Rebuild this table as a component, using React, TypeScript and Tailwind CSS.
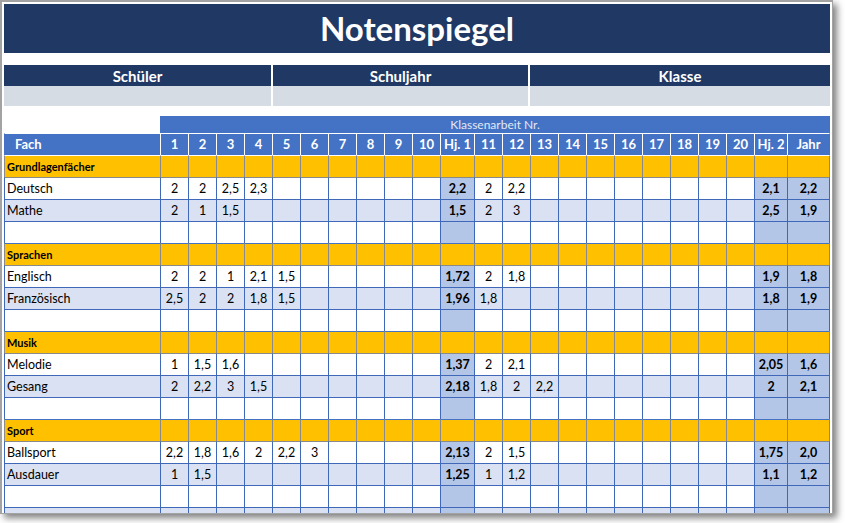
const widthClass = [
  "w-[156px]",
  "w-[28px]", "w-[28px]", "w-[28px]", "w-[28px]", "w-[28px]",
  "w-[28px]", "w-[28px]", "w-[28px]", "w-[28px]", "w-[28px]",
  "w-[34px]",
  "w-[28px]", "w-[28px]", "w-[28px]", "w-[28px]", "w-[28px]",
  "w-[28px]", "w-[28px]", "w-[28px]", "w-[28px]", "w-[28px]",
  "w-[33px]",
  "w-[43px]",
]

const headers = [
  "Fach",
  "1", "2", "3", "4", "5", "6", "7", "8", "9", "10",
  "Hj. 1",
  "11", "12", "13", "14", "15", "16", "17", "18", "19", "20",
  "Hj. 2",
  "Jahr",
]

const HJ = [11, 22, 23]
const LAST = headers.length - 1

type Row =
  | { t: "cat"; label: string }
  | { t: "row"; label: string; alt: boolean; a: string[]; h1: string; b: string[]; h2: string; j: string }
  | { t: "empty"; alt: boolean }

const rows: Row[] = [
  { t: "cat", label: "Grundlagenfächer" },
  { t: "row", label: "Deutsch", alt: false, a: ["2", "2", "2,5", "2,3"], h1: "2,2", b: ["2", "2,2"], h2: "2,1", j: "2,2" },
  { t: "row", label: "Mathe", alt: true, a: ["2", "1", "1,5"], h1: "1,5", b: ["2", "3"], h2: "2,5", j: "1,9" },
  { t: "empty", alt: false },
  { t: "cat", label: "Sprachen" },
  { t: "row", label: "Englisch", alt: false, a: ["2", "2", "1", "2,1", "1,5"], h1: "1,72", b: ["2", "1,8"], h2: "1,9", j: "1,8" },
  { t: "row", label: "Französisch", alt: true, a: ["2,5", "2", "2", "1,8", "1,5"], h1: "1,96", b: ["1,8"], h2: "1,8", j: "1,9" },
  { t: "empty", alt: false },
  { t: "cat", label: "Musik" },
  { t: "row", label: "Melodie", alt: false, a: ["1", "1,5", "1,6"], h1: "1,37", b: ["2", "2,1"], h2: "2,05", j: "1,6" },
  { t: "row", label: "Gesang", alt: true, a: ["2", "2,2", "3", "1,5"], h1: "2,18", b: ["1,8", "2", "2,2"], h2: "2", j: "2,1" },
  { t: "empty", alt: false },
  { t: "cat", label: "Sport" },
  { t: "row", label: "Ballsport", alt: false, a: ["2,2", "1,8", "1,6", "2", "2,2", "3"], h1: "2,13", b: ["2", "1,5"], h2: "1,75", j: "2,0" },
  { t: "row", label: "Ausdauer", alt: true, a: ["1", "1,5"], h1: "1,25", b: ["1", "1,2"], h2: "1,1", j: "1,2" },
  { t: "empty", alt: false },
  { t: "empty", alt: true },
]

function pad(v: string[]) {
  return Array.from({ length: 10 }, (_, i) => v[i] ?? "")
}

function valuesOf(r: Row): string[] {
  if (r.t === "row") return [r.label, ...pad(r.a), r.h1, ...pad(r.b), r.h2, r.j]
  return headers.map(() => "")
}

function HeaderRow() {
  return (
    <div className="flex h-[22px]">
      {headers.map((h, i) => (
        <div
          key={i}
          className={`${widthClass[i]} shrink-0 flex items-center border-l border-t border-t-white bg-[#4472C4] pt-[1px] text-[13px] font-bold text-white ${
            i === 0 ? "justify-start pl-[10px] border-l-[#4472C4]" : "justify-center border-l-white"
          } ${i === LAST ? "border-r border-r-[#4472C4]" : ""}`}
        >
          {h}
        </div>
      ))}
    </div>
  )
}

function CatRow({ label, first }: { label: string; first: boolean }) {
  return (
    <div className="flex h-[22px]">
      {headers.map((_, i) => (
        <div
          key={i}
          className={`${widthClass[i]} shrink-0 flex items-center border-l border-t border-l-[#8a8a8a] bg-[#FFC000] pt-[2px] ${
            first ? "border-t-white" : "border-t-[#4472C4]"
          } ${i === LAST ? "border-r border-r-[#8a8a8a]" : ""}`}
        >
          {i === 0 && <span className="pl-[2px] text-[11px] font-bold text-black">{label}</span>}
        </div>
      ))}
    </div>
  )
}

function DataRow({ row, afterCat }: { row: Row; afterCat: boolean }) {
  const alt = row.t !== "cat" && row.alt
  const vals = valuesOf(row)
  return (
    <div className="flex h-[22px]">
      {vals.map((v, i) => {
        const hj = HJ.includes(i)
        const bg = hj ? "bg-[#B4C6E7]" : alt ? "bg-[#D9E1F2]" : "bg-white"
        return (
          <div
            key={i}
            className={`${widthClass[i]} shrink-0 flex items-center border-l border-t border-l-[#3F69B8] pt-[2px] ${
              afterCat ? "border-t-[#8a8a8a]" : "border-t-[#3F69B8]"
            } ${bg} ${i === 0 ? "justify-start pl-[2px]" : "justify-center"} ${hj ? "font-bold" : ""} ${
              i === LAST ? "border-r border-r-[#3F69B8]" : ""
            } text-[12.5px] text-black`}
          >
            {v}
          </div>
        )
      })}
    </div>
  )
}

function InfoBlock({ label, width }: { label: string; width: string }) {
  return (
    <div className={`${width} flex flex-col`}>
      <div className="flex h-[21px] items-center justify-center bg-[#203864] pt-[1px] text-[15px] font-bold text-white">{label}</div>
      <div className="h-[20px] bg-[#D6DCE4]" />
    </div>
  )
}

export default function App() {
  return (
    <div className="h-[523px] w-[845px] overflow-hidden bg-white [font-family:Lato,'Liberation_Sans',sans-serif]">
      <div className="h-[514px] w-[833px] overflow-hidden border-b border-l-2 border-r border-t-2 border-[#a3a3a3] bg-white p-[2px] shadow-[4px_4px_7px_rgba(0,0,0,0.5)]">
        <div className="flex h-[49px] items-center justify-center bg-[#203864] text-[33px] font-bold text-white">
          Notenspiegel
        </div>

        <div className="mt-[12px] flex gap-[2px]">
          <InfoBlock label="Schüler" width="w-[267px]" />
          <InfoBlock label="Schuljahr" width="w-[255px]" />
          <InfoBlock label="Klasse" width="w-[300px]" />
        </div>

        <div className="mt-[10px] flex h-[17px]">
          <div className="w-[156px] shrink-0" />
          <div className="flex flex-1 items-center justify-center bg-[#4472C4] pt-[1px] text-[12px] text-[#e2e9f6]">
            Klassenarbeit Nr.
          </div>
        </div>

        <HeaderRow />
        {rows.map((r, idx) => {
          const prev = rows[idx - 1]
          if (r.t === "cat") return <CatRow key={idx} label={r.label} first={idx === 0} />
          return <DataRow key={idx} row={r} afterCat={prev?.t === "cat"} />
        })}
      </div>
    </div>
  )
}
